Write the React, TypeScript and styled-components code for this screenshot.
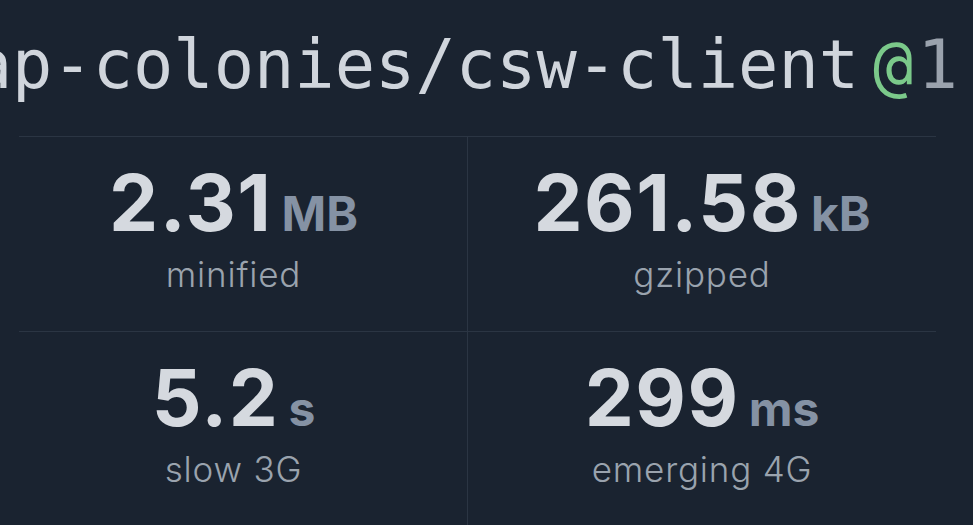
import React from "react";
import styled, { createGlobalStyle } from "styled-components";

const Global = createGlobalStyle`
  html, body { margin: 0; padding: 0; background: #1a2330; overflow: hidden; }
  body { width: 973px; height: 525px; }
`;

const Page = styled.main`
  width: 973px;
  height: 525px;
  overflow: hidden;
  background: #1a2330;
  display: flex;
  flex-direction: column;
`;

const Title = styled.h1`
  margin: 31px 0 0 -109px;
  font-family: "DejaVu Sans Mono", monospace;
  font-weight: 400;
  font-size: 67px;
  line-height: 68px;
  white-space: nowrap;
  color: #d0d5dc;
`;

const At = styled.span`
  margin: 0 4px 0 14px;
  color: #7bc98a;
`;

const Version = styled.span`
  color: #9aa2ad;
`;

const Stats = styled.section`
  margin-top: 37px;
  width: 936px;
  display: grid;
  grid-template-columns: 468px 468px;
`;

const Rule = styled.div`
  grid-column: 1 / -1;
  height: 1px;
  margin-left: 19px;
  background: #2b3543;
`;

const Cell = styled.div<{ $left?: boolean }>`
  height: 194px;
  display: flex;
  flex-direction: column;
  align-items: center;
  padding-top: 27px;
  box-sizing: border-box;
  border-right: ${(p) => (p.$left ? "1px solid #2b3543" : "none")};
`;

const Value = styled.div`
  display: flex;
  align-items: baseline;
  font-family: Inter, "Noto Sans", sans-serif;
  font-weight: 700;
  font-size: 78px;
  line-height: 78px;
  color: #d5d9df;
  letter-spacing: 1.5px;
`;

const Unit = styled.span`
  margin-left: 9px;
  font-size: 48px;
  color: #8592a4;
  letter-spacing: 0;
`;

const Label = styled.div`
  margin-top: 1px;
  font-family: Inter, "Noto Sans", sans-serif;
  font-weight: 300;
  font-size: 35px;
  line-height: 40px;
  letter-spacing: 0.8px;
  color: #9aa3ae;
`;

type Stat = { value: string; unit: string; label: string };

const rows: Stat[][] = [
  [
    { value: "2.31", unit: "MB", label: "minified" },
    { value: "261.58", unit: "kB", label: "gzipped" },
  ],
  [
    { value: "5.2", unit: "s", label: "slow 3G" },
    { value: "299", unit: "ms", label: "emerging 4G" },
  ],
];

export default function App() {
  return (
    <Page>
      <Global />
      <Title>
        @map-colonies/csw-client<At>@</At>
        <Version>1.0.0</Version>
      </Title>
      <Stats>
        {rows.map((row, i) => (
          <React.Fragment key={i}>
            <Rule />
            {row.map((s, j) => (
              <Cell key={s.label} $left={j === 0}>
                <Value>
                  {s.value}
                  <Unit>{s.unit}</Unit>
                </Value>
                <Label>{s.label}</Label>
              </Cell>
            ))}
          </React.Fragment>
        ))}
      </Stats>
    </Page>
  );
}
